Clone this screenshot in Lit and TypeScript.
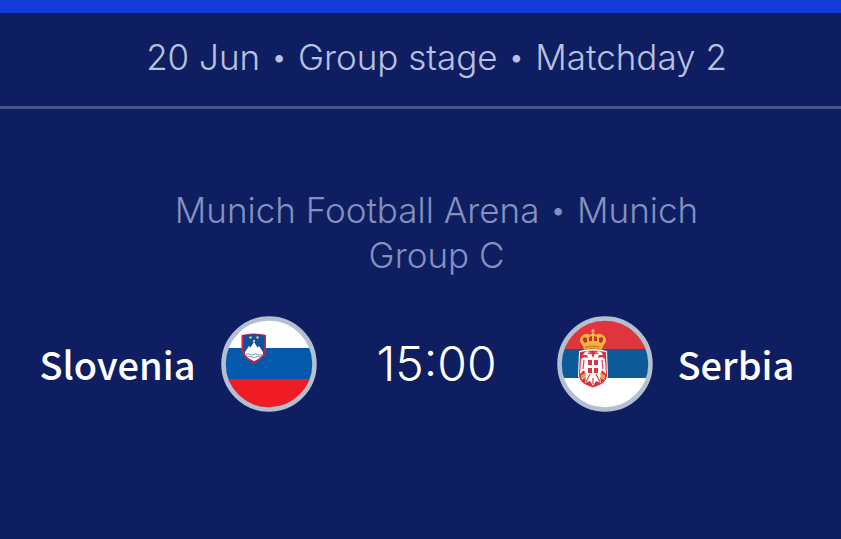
import { LitElement, html, css, svg } from "lit";
import { customElement, property } from "lit/decorators.js";

const slovenia = svg`
  <rect width="96" height="96" fill="#fff"/>
  <rect y="32" width="96" height="32" fill="#0559ad"/>
  <rect y="63" width="96" height="33" fill="#ef1c25"/>
  <path d="M20.500 19Q33 16 45 19L45 34Q43 44 33 47.500Q23 44 20.500 34Z" fill="#d6203a"/>
  <path d="M22.500 19.500Q33 17 43.500 19.500L43.500 33Q42 42 33 45.500Q24 42 22.500 33Z" fill="#154f9f"/>
  <path d="M24 38L24 36L28 30L29.500 31.500L33 26L36.500 31.500L38 30L42 36L42 38Q39 43 33 45Q27 43 24 38Z" fill="#fff"/>
  <path d="M25 38.500Q27 37 29 38.500T33 38.500T37 38.500T41 38.500M26.500 41Q28.500 40 31 41T35 41T39.500 41" fill="none" stroke="#6f9bcb" stroke-width="1"/>
  <g fill="#d8d848"><circle cx="29.500" cy="21.500" r="1.200"/><circle cx="36.500" cy="21.500" r="1.200"/><circle cx="33" cy="25" r="1.200"/></g>`;

const serbia = svg`
  <rect width="96" height="96" fill="#fff"/>
  <rect width="96" height="34" fill="#df363e"/>
  <rect y="33" width="96" height="29" fill="#0d5a98"/>
  <path d="M22 35Q36 31 50 35L51 60Q50 69 36 73Q23 69 21 60Z" fill="#fff"/>
  <path d="M23 36Q36 33 49 36L50 60Q49 68 36 71.500Q23 68 22 60Z" fill="#df2f3b"/>
  <path d="M36 42L34 37Q31 34 28 36L26 39L30 39L31 42Q25 40 24 44L23 58L27 54L28 57L24 64L29 61L28 67L33 65L36 70L39 65L44 67L43 61L48 64L44 57L45 54L49 58L48 44Q47 40 41 42L42 39L46 39L44 36Q41 34 38 37Z" fill="#fff"/>
  <g fill="#d93643">
    <rect x="31" y="44" width="4" height="5"/><rect x="37" y="44" width="4" height="5"/>
    <rect x="31" y="52" width="4" height="5"/><rect x="37" y="52" width="4" height="5"/>
  </g>
  <path d="M27 44L26 53M45 44L46 53M33 58L29 66M39 58L43 66M34 38Q32 36 31 38M38 38Q40 36 41 38M36 62V68" stroke="#df4a54" stroke-width="1.300" fill="none"/>
  <path d="M24 59L29 57L28 63L24 62ZM48 59L43 57L44 63L48 62Z" fill="#e9a53a"/>
  <path d="M27 31Q20 24 25 20Q29 16 33 19Q36 15 39 19Q43 16 47 20Q52 24 45 31Q36 28 27 31Z" fill="#efb83c"/>
  <path d="M28 27Q24 24 27 21L30 22L30 26ZM44 27Q48 24 45 21L42 22L42 26ZM32 25L32 21L35 20L35 25ZM40 25L40 21L37 20L37 25Z" fill="#c92d35"/>
  <path d="M26 30Q36 27 46 30L45 34Q36 31 27 34Z" fill="#e8a934"/>
  <path d="M29 31.500Q36 29.500 43 31.500" stroke="#b84a32" stroke-width="1" stroke-dasharray="2 1.500" fill="none"/>
  <path d="M36 13V19M34 15H38" stroke="#f1c64a" stroke-width="1.200"/>`;

const flags = { Slovenia: slovenia, Serbia: serbia };

@customElement("team-flag")
export class TeamFlag extends LitElement {
  @property() team: keyof typeof flags = "Slovenia";

  static styles = css`
    :host { display: block; width: 96px; height: 96px; }
    .flag { display: block; width: 100%; height: 100%; }
  `;

  render() {
    return html`<svg class="flag" viewBox="0 0 96 96" role="img" aria-label="Flag of ${this.team}">
      <defs><clipPath id="disc"><circle cx="48" cy="48" r="45"/></clipPath></defs>
      <g clip-path="url(#disc)">${flags[this.team]}</g>
      <circle cx="48" cy="48" r="45.500" fill="none" stroke="#b4c0d1" stroke-width="4.500"/>
    </svg>`;
  }
}

@customElement("app-root")
export class AppRoot extends LitElement {
  static styles = css`
    :host {
      display: block;
      min-height: 100vh;
      box-sizing: border-box;
      background: #0e1e61;
      border-top: 13px solid #143bdb;
      font-family: Inter, "Liberation Sans", sans-serif;
      font-weight: 300;
      color: #fff;
    }
    .stage, .venue {
      display: flex;
      justify-content: center;
      gap: 11px;
      font-size: 35px;
      line-height: 45px;
      white-space: nowrap;
    }
    .dot { font-size: 28px; }
    .stage {
      padding: 22px 0 26px 32px;
      color: #b9c1e0;
      border-bottom: 3px solid #47568d;
    }
    .match { padding: 79px 0 0 32px; }
    .venue { color: #8490bd; }
    .fixture {
      display: grid;
      grid-template-columns: 1fr 96px 190px 96px 1fr;
      column-gap: 25px;
      align-items: center;
      margin-top: 38px;
    }
    .team {
      font: 500 38px/48px "Noto Sans CJK SC", "Noto Sans", sans-serif;
      white-space: nowrap;
    }
    .home { text-align: right; }
    .time { text-align: center; font-size: 48px; line-height: 48px; }
  `;

  render() {
    return html`
      <header class="stage">
        <span>20 Jun</span><span class="dot">•</span><span>Group stage</span><span class="dot">•</span><span>Matchday 2</span>
      </header>
      <main class="match">
        <div class="venue"><span>Munich Football Arena</span><span class="dot">•</span><span>Munich</span></div>
        <div class="venue">Group C</div>
        <div class="fixture">
          <span class="team home">Slovenia</span>
          <team-flag team="Slovenia"></team-flag>
          <time class="time" datetime="15:00">15:00</time>
          <team-flag team="Serbia"></team-flag>
          <span class="team">Serbia</span>
        </div>
      </main>
    `;
  }
}
